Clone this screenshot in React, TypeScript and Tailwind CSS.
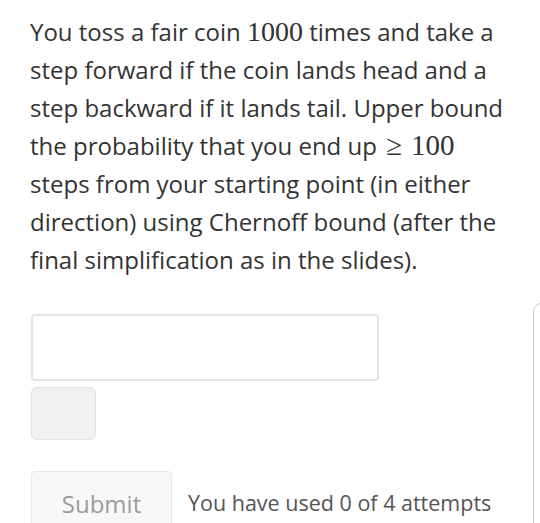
export default function App() {
  const sans = { fontFamily: '"Open Sans", "Noto Sans", sans-serif' };
  return (
    <div className="w-[540px] h-[523px] overflow-hidden bg-white flex" style={sans}>
      <div className="w-[533px] shrink-0 pl-[30px] pt-[13px]">
        <p className="text-[24px] leading-[38px] text-[#333] w-[482px]">
          You toss a fair coin{" "}
          <span className="font-['Liberation_Serif',serif] text-[28px] leading-none">1000</span> times and
          take a step forward if the coin lands head and a step backward if it lands tail. Upper bound
          the probability that you end up{" "}
          <span className="font-['Liberation_Serif',serif] text-[29px] leading-none">
            <span className="ml-[3px] mr-[9px]">≥</span>100
          </span>{" "}
          steps from your starting point (in either direction) using Chernoff bound (after the final
          simplification as in the slides).
        </p>

        <div className="mt-[35px] ml-px w-[348px] h-[67px] rounded border-2 border-[#e4e4e4] bg-white" />
        <div className="mt-[6px] ml-px w-[65px] h-[53px] rounded-md border border-[#e2e2e2] bg-[#f1f1f1]" />

        <div className="mt-[31px] ml-px flex items-start gap-4">
          <button className="w-[141px] h-[70px] rounded-t border border-[#e8e8e8] bg-[#f8f8f8] text-[24px] text-[#9b9b9b] pt-[14px] flex justify-center items-start">
            Submit
          </button>
          <span className="text-[21.5px] text-[#555] pt-[16px]">You have used 0 of 4 attempts</span>
        </div>
      </div>
      <div className="shrink-0 w-[200px] h-[300px] mt-[303px] rounded-tl-lg border border-[#cfcfcf]" />
    </div>
  );
}
